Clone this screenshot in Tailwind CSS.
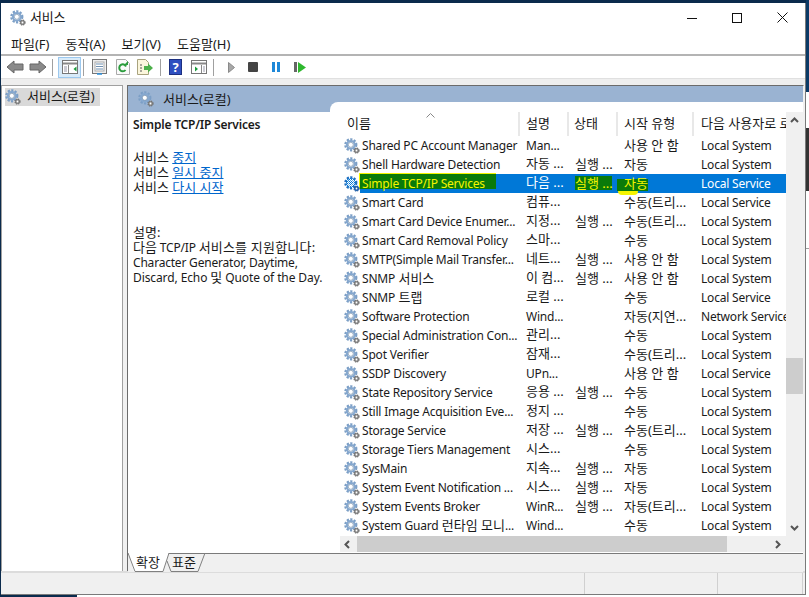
<!DOCTYPE html>
<html lang="ko">
<head>
<meta charset="UTF-8">
<title>서비스</title>
<script src="https://cdn.jsdelivr.net/npm/@tailwindcss/browser@4"></script>
</head>
<body class="relative w-[809px] h-[597px] overflow-hidden bg-white font-['Noto_Sans','Noto_Sans_CJK_KR',sans-serif] text-[12px] leading-[16px] tracking-[-0.2px] text-[#1a1a1a]">
<svg class="absolute w-0 h-0">
  <defs>
    <pattern id="dither" width="2" height="2" patternUnits="userSpaceOnUse">
      <rect x="0" y="0" width="1" height="1" fill="#0078d7"/>
      <rect x="1" y="1" width="1" height="1" fill="#0078d7"/>
    </pattern>
  </defs>
  <symbol id="gear" viewBox="0 0 16 16">
    <circle cx="6.800" cy="6.800" r="5.300" fill="none" stroke="#7c9fc6" stroke-width="2.600" stroke-dasharray="2.100 1.300"/>
    <circle cx="6.800" cy="6.800" r="3.900" fill="none" stroke="#86a8cf" stroke-width="2"/>
    <circle cx="6.800" cy="6.800" r="2.500" fill="#fff" stroke="#5f7f9f" stroke-width=".6"/>
    <circle cx="12.500" cy="12.500" r="2.500" fill="#8a8a8a" stroke="#707070" stroke-width="1.200" stroke-dasharray="1.200 .8"/>
    <circle cx="12.500" cy="12.500" r=".9" fill="#fff"/>
  </symbol>
  <symbol id="gear-selected" viewBox="0 0 16 16">
    <circle cx="6.800" cy="6.800" r="5.300" fill="none" stroke="#1f6fc0" stroke-width="2.600" stroke-dasharray="2.100 1.300"/>
    <circle cx="6.800" cy="6.800" r="3.900" fill="none" stroke="url(#dither)" stroke-width="2"/>
    <circle cx="6.800" cy="6.800" r="2.500" fill="url(#dither)"/>
    <circle cx="12.500" cy="12.500" r="2.500" fill="#1f5fa8" stroke="#1f5fa8" stroke-width="1.200" stroke-dasharray="1.200 .8"/>
    <circle cx="12.500" cy="12.500" r=".9" fill="#fff"/>
  </symbol>
</svg>

<!-- what shows of the desktop and other windows round the edges -->
<div class="absolute left-0 top-0 w-full h-[3px] bg-[#0a2a4c]"></div>
<div class="absolute left-0 top-0 w-px h-full bg-[#0a2a4c]"></div>
<div class="absolute left-[806px] top-0 w-[3px] h-[92px] bg-[#0b3a66]"></div>
<div class="absolute left-[806px] top-[128px] w-[3px] h-[63px] bg-[#333333]"></div>
<div class="absolute left-[806px] top-[248px] w-[3px] h-px bg-[#a0a0a0]"></div>
<div class="absolute left-0 top-[595px] w-[77px] h-[2px] bg-[#0a2a4c]"></div>

<div class="mt-[3px] ml-px w-[805px] h-[592px] bg-white border-r border-b border-[#7a7a7a] flex flex-col">
  <!-- title -->
  <div class="h-[29px] shrink-0 flex items-center pl-[9px]">
    <svg class="w-4 h-4"><use href="#gear"/></svg>
    <span class="ml-[4px] mb-[2px] text-[13px]">서비스</span>
    <div class="ml-auto flex items-center gap-[35px] pr-[17px]">
      <svg class="w-[10px] h-[10px]" viewBox="0 0 10 10"><path d="M0 5.500h10" stroke="#111"/></svg>
      <svg class="w-[10px] h-[10px]" viewBox="0 0 10 10"><rect x=".5" y=".5" width="9" height="9" fill="none" stroke="#111"/></svg>
      <svg class="w-[11px] h-[11px]" viewBox="0 0 11 11"><path d="M.5.5l10 10M10.500.5l-10 10" stroke="#111"/></svg>
    </div>
  </div>
  <!-- menu -->
  <div class="h-[24px] shrink-0 flex items-center gap-[16px] pl-[10px] pt-[2px] border-b-2 border-[#b4b4b4] text-[13px] tracking-normal">
    <span>파일(F)</span><span>동작(A)</span><span>보기(V)</span><span>도움말(H)</span>
  </div>
  <!-- toolbar -->
  <div class="h-[22px] shrink-0 flex items-center pl-[5px]">
    <svg class="w-[18px] h-[16px]" viewBox="0 0 18 16"><path d="M1 8l7-6v3h9v6H8v3z" fill="#8a8a8a" stroke="#666"/></svg>
    <svg class="ml-[5px] w-[18px] h-[16px]" viewBox="0 0 18 16"><path d="M17 8l-7-6v3H1v6h9v3z" fill="#8a8a8a" stroke="#666"/></svg>
    <div class="ml-[5px] w-px h-[17px] bg-[#a0a0a0]"></div>
    <div class="ml-[5px] w-[23px] h-[21px] bg-[#d9ebf9] border border-[#9cc8ee] flex items-center justify-center">
      <svg class="w-4 h-[14px]" viewBox="0 0 16 14"><rect x=".5" y=".5" width="15" height="13" fill="#fff" stroke="#777"/><path d="M1 3.500h14" stroke="#888" stroke-width="2"/><path d="M6.500 5v8" stroke="#888"/><path d="M11.500 9l3-2.500v5z" fill="#1a9c3c"/><path d="M2 7h3M2 9h3M2 11h3" stroke="#99a"/></svg>
    </div>
    <div class="ml-[2px] w-px h-[17px] bg-[#a0a0a0]"></div>
    <svg class="ml-[8px] w-[15px] h-[16px]" viewBox="0 0 15 16"><rect x=".5" y=".5" width="14" height="14" fill="#eee" stroke="#777"/><rect x="3" y="3" width="9" height="9" fill="#fff" stroke="#aaa"/><path d="M4 5h7M4 7.500h7M4 10h7" stroke="#6f8fb0"/><path d="M5 15h5" stroke="#2a8fdc" stroke-width="1.500"/></svg>
    <svg class="ml-[9px] w-[14px] h-[16px]" viewBox="0 0 14 16"><path d="M.5.500h9l4 4v11H.500z" fill="#fafafa" stroke="#aaa"/><path d="M10 7.500a3.500 3.500 0 1 0-.5 3.500" fill="none" stroke="#2a9c3c" stroke-width="2"/><path d="M8 6h4V2z" fill="#2a9c3c"/></svg>
    <svg class="ml-[7px] w-[16px] h-[16px]" viewBox="0 0 16 16"><path d="M.5.500h8l3 3v12H.500z" fill="#fbf6dc" stroke="#a9a37e"/><path d="M3 6h2M3 9h2M3 12h2" stroke="#555"/><path d="M7 7h4V4.500L16 9l-5 4.500V11H7z" fill="#4db04a"/></svg>
    <div class="ml-[7px] w-px h-[17px] bg-[#a0a0a0]"></div>
    <div class="ml-[8px] w-[13px] h-[16px] bg-[#2f4fc0] border border-[#1c2f80] flex items-center justify-center text-white text-[13px] font-bold">?</div>
    <svg class="ml-[9px] w-[16px] h-[14px]" viewBox="0 0 16 14"><rect x=".5" y=".5" width="15" height="13" fill="#fff" stroke="#777"/><path d="M1 3.500h14" stroke="#888" stroke-width="2"/><path d="M10.500 5v8" stroke="#888"/><path d="M4 6.500l3 2.500-3 2.500z" fill="#1a9c3c"/><path d="M12 7h2M12 9h2M12 11h2" stroke="#99a"/></svg>
    <div class="ml-[6px] w-px h-[17px] bg-[#a0a0a0]"></div>
    <svg class="ml-[14px] w-[7px] h-[11px]" viewBox="0 0 7 11"><path d="M.5.500v10l6-5z" fill="#a8a8a8" stroke="#8a8a8a"/></svg>
    <div class="ml-[13px] w-[10px] h-[10px] bg-[#444] rounded-[1px]"></div>
    <div class="ml-[14px] flex gap-[2px]"><div class="w-[3px] h-[10px] bg-[#1e88d8]"></div><div class="w-[3px] h-[10px] bg-[#1e88d8]"></div></div>
    <div class="ml-[14px] flex gap-px items-center"><div class="w-[3px] h-[10px] bg-[#666]"></div><svg class="w-[8px] h-[11px]" viewBox="0 0 8 11"><path d="M0 0v11l8-5.500z" fill="#2eb82e"/></svg></div>
  </div>
  <div class="h-[7px] shrink-0 bg-[#eeeeee] border-t border-[#e0e0e0]"></div>

  <!-- main -->
  <div class="flex-1 min-h-0 flex bg-[#f0f0f0]">
    <!-- tree -->
    <div class="w-[122px] shrink-0 bg-white border border-[#a0a0a0] pt-[2px] pl-[3px] h-[487px] -mr-px">
      <div class="w-[95px] h-[18px] bg-[#d9d9d9] flex items-center">
        <svg class="w-4 h-4"><use href="#gear"/></svg>
        <span class="ml-[6px] mb-[3px] whitespace-nowrap text-[13px] tracking-normal">서비스(로컬)</span>
      </div>
    </div>
    <!-- right pane -->
    <div class="ml-[5px] w-[677px] h-[487px] border-t border-l border-[#6b6b6b] border-r border-r-[#f0f0f0] flex flex-col bg-white">
      <div class="flex-1 min-h-0 flex flex-col">
        <div class="flex h-[26px] shrink-0 bg-[#9ab3d2] items-center pl-[10px]">
          <svg class="w-4 h-4"><use href="#gear"/></svg>
          <span class="ml-[9px] text-[13px] tracking-normal">서비스(로컬)</span>
        </div>
        <div class="flex flex-1 min-h-0">
          <!-- description -->
          <div class="w-[202px] shrink-0 pl-[5px] leading-[15px]">
            <div class="font-semibold mb-[18px] mt-[5px]">Simple TCP/IP Services</div>
            <div class="text-[13px] tracking-normal">서비스 <a class="text-[#0066cc] underline" href="#">중지</a></div>
            <div class="text-[13px] tracking-normal">서비스 <a class="text-[#0066cc] underline" href="#">일시 중지</a></div>
            <div class="text-[13px] tracking-normal">서비스 <a class="text-[#0066cc] underline" href="#">다시 시작</a></div>
            <div class="mt-[30px] text-[13px] tracking-normal">설명:</div>
            <div class="whitespace-nowrap"><span class="text-[13px] tracking-normal">다음</span> TCP/IP <span class="text-[13px] tracking-[0.2px]">서비스를 지원합니다:</span></div>
            <div class="whitespace-nowrap">Character Generator, Daytime,</div>
            <div class="whitespace-nowrap tracking-[-0.1px]">Discard, Echo <span class="text-[13px]">및</span> Quote of the Day.</div>
          </div>
          <!-- list -->
          <div class="flex-1 min-w-0 -mt-[10px] bg-white rounded-tl-[8px] flex flex-col relative">
            <div class="flex-1 min-h-0 flex">
              <div class="w-[456px] shrink-0 overflow-hidden">
                <div class="h-[34px] pt-[10px] flex items-stretch relative text-[13px] tracking-normal">
                  <svg class="absolute left-[96px] top-[11px] w-[9px] h-[5px]" viewBox="0 0 9 5"><path d="M.5 4.500l4-4 4 4" fill="none" stroke="#888"/></svg>
                  <div class="w-[190px] pl-[17px] pb-[3px] flex items-center border-r-2 border-[#e8e8e8] shrink-0">이름</div>
                  <div class="w-[49px] pl-[6px] pb-[3px] flex items-center border-r-2 border-[#e8e8e8] shrink-0">설명</div>
                  <div class="w-[49px] pl-[5px] pb-[3px] flex items-center border-r-2 border-[#e8e8e8] shrink-0">상태</div>
                  <div class="w-[76px] pl-[6px] pb-[3px] flex items-center border-r-2 border-[#e8e8e8] shrink-0 whitespace-nowrap">시작 유형</div>
                  <div class="pl-[7px] pb-[3px] flex items-center whitespace-nowrap">다음 사용자로 로그온</div>
                </div>
                <div id="rows"></div>
              </div>
              <!-- vertical scrollbar -->
              <div class="w-[17px] shrink-0 mt-[10px] bg-[#f0f0f0] flex flex-col items-center relative">
                <svg class="mt-[5px] w-[9px] h-[6px]" viewBox="0 0 9 6"><path d="M1 5l3.500-3.500L8 5" fill="none" stroke="#555" stroke-width="2"/></svg>
                <div class="absolute top-[246px] left-0 w-full h-[36px] bg-[#cdcdcd]"></div>
                <svg class="mt-auto mb-[5px] w-[9px] h-[6px]" viewBox="0 0 9 6"><path d="M1 1l3.500 3.500L8 1" fill="none" stroke="#555" stroke-width="2"/></svg>
              </div>
            </div>
            <!-- horizontal scrollbar -->
            <div class="h-[16px] shrink-0 mb-px ml-[10px] bg-[#f0f0f0] flex items-center">
              <svg class="ml-[4px] w-[6px] h-[9px]" viewBox="0 0 6 9"><path d="M5 1L1.500 4.500 5 8" fill="none" stroke="#555" stroke-width="2"/></svg>
              <div class="ml-[7px] w-[370px] h-full bg-[#cdcdcd]"></div>
              <svg class="ml-auto mr-[22px] w-[6px] h-[9px]" viewBox="0 0 6 9"><path d="M1 1l3.500 3.500L1 8" fill="none" stroke="#555" stroke-width="2"/></svg>
            </div>
          </div>
        </div>
      </div>
      <!-- tabs -->
      <div class="h-[19px] shrink-0 bg-[#f0f0f0] border-t border-[#7a7a7a] relative text-[13px] tracking-normal">
        <div class="absolute left-0 -top-px w-[41px] h-[19px] bg-white [clip-path:polygon(0_0,100%_0,85%_100%,15%_100%)]"></div>
        <svg class="absolute left-0 -top-px w-[80px] h-[19px]" viewBox="0 0 80 19"><path d="M0 0l7 18.500h28l6-18.500M39 8l4 10.500h27l7-18.500" fill="none" stroke="#808080"/></svg>
        <div class="relative flex pl-[8px] gap-[12px] leading-[16px]"><span>확장</span><span>표준</span></div>
      </div>
    </div>
  </div>
  <!-- status -->
  <div class="h-[23px] shrink-0 bg-[#f0f0f0] border-t-2 border-[#dcdcdc] flex justify-end">
    <div class="w-[219px] mr-[2px] border-l border-r border-[#d0d0d0] flex"><div class="w-[133px] border-r border-[#d0d0d0]"></div></div>
  </div>
</div>

<script>
  // name, description, status, startup type, logon as
  const services = [
    ["Shared PC Account Manager", "Man...", "", "사용 안 함", "Local System"],
    ["Shell Hardware Detection", "자동 ...", "실행 ...", "자동", "Local System"],
    ["Simple TCP/IP Services", "다음 ...", "실행 ...", "자동", "Local Service"],
    ["Smart Card", "컴퓨...", "", "수동(트리...", "Local Service"],
    ["Smart Card Device Enumer...", "지정...", "실행 ...", "수동(트리...", "Local System"],
    ["Smart Card Removal Policy", "스마...", "", "수동", "Local System"],
    ["SMTP(Simple Mail Transfer...", "네트...", "실행 ...", "사용 안 함", "Local System"],
    ["SNMP 서비스", "이 컴...", "실행 ...", "사용 안 함", "Local System"],
    ["SNMP 트랩", "로컬 ...", "", "수동", "Local Service"],
    ["Software Protection", "Wind...", "", "자동(지연...", "Network Service"],
    ["Special Administration Con...", "관리...", "", "수동", "Local System"],
    ["Spot Verifier", "잠재...", "", "수동(트리...", "Local System"],
    ["SSDP Discovery", "UPn...", "", "사용 안 함", "Local Service"],
    ["State Repository Service", "응용 ...", "실행 ...", "수동", "Local System"],
    ["Still Image Acquisition Eve...", "정지 ...", "", "수동", "Local System"],
    ["Storage Service", "저장 ...", "실행 ...", "수동(트리...", "Local System"],
    ["Storage Tiers Management", "시스...", "", "수동", "Local System"],
    ["SysMain", "지속...", "실행 ...", "자동", "Local System"],
    ["System Event Notification ...", "시스...", "실행 ...", "자동", "Local System"],
    ["System Events Broker", "WinR...", "실행 ...", "자동(트리...", "Local System"],
    ["System Guard 런타임 모니...", "Wind...", "", "수동", "Local System"],
  ];

  const rowsEl = document.getElementById("rows");
  services.forEach((s, i) => {
    const selected = i === 2;
    const desc = /^[A-Z]/.test(s[1]) ? s[1] : `<span class="inline-block -translate-y-px text-[13px] tracking-normal">${s[1]}</span>`;
    const name = s[0].replace(/[가-힣 ]*[가-힣][가-힣 ]*/g, (m) => `<span class="text-[13px] tracking-normal">${m}</span>`);
    const marks = selected ? `
      <div class="absolute left-[30px] top-0 w-[426px] h-full bg-[#0078d7]"></div>
      <div class="absolute left-[29px] -top-px w-[137px] h-[16px] bg-[#0a7a0a] border-t border-l border-[#f5f500]"></div>
      <div class="absolute left-[245px] top-[2px] w-[37px] h-[14px] bg-[#0a7a0a]"></div>
      <div class="absolute left-[287px] top-[5px] w-[31px] h-[12px] bg-[#0a7a0a]"></div>
      <div class="absolute left-[288px] top-[17px] w-[20px] h-[4px] bg-[#f5f500] rounded-b-[4px]"></div>` : "";
    rowsEl.innerHTML += `
      <div class="relative flex h-[19px] items-center whitespace-nowrap ${selected ? "text-[#f5f500]" : ""}">
        ${marks}
        <svg class="relative ml-[14px] w-4 h-4 shrink-0"><use href="${selected ? "#gear-selected" : "#gear"}"/></svg>
        <span class="relative ml-[2px] w-[158px] shrink-0 overflow-hidden">${name}</span>
        <span class="relative ml-[6px] w-[49px] shrink-0 ${selected ? "text-white" : ""}">${desc}</span>
        <span class="relative w-[49px] shrink-0 pb-[2px] text-[13px] tracking-normal">${s[2]}</span>
        <span class="relative w-[77px] shrink-0 pb-[2px] text-[13px] tracking-normal">${s[3]}</span>
        <span class="relative ${selected ? "text-white" : ""}">${s[4]}</span>
      </div>`;
  });
</script>
</body>
</html>
